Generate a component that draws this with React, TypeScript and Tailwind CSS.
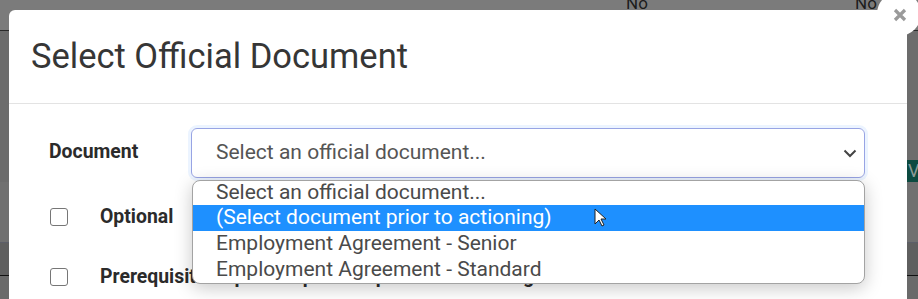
import React from "react";

const options = [
  "Select an official document...",
  "(Select document prior to actioning)",
  "Employment Agreement - Senior",
  "Employment Agreement - Standard",
];

function Backdrop() {
  return (
    <div className="flex flex-col w-full h-full">
      <div className="h-[31px] bg-[#7b7b7b] border-b border-[#2a2a2a] relative">
        <span className="absolute left-[626px] top-[-9px] text-[17px] text-[#1c1c1c]">No</span>
        <span className="absolute left-[855px] top-[-9px] text-[17px] text-[#1c1c1c]">No</span>
      </div>
      <div className="h-[151px] bg-[#6c6c6c] flex justify-end items-end">
        <div className="w-[11px] h-[22px] bg-[#0c4a40] text-[#8a9a96] text-[18px] leading-[22px] pl-[1px] overflow-hidden">V</div>
      </div>
      <div className="h-[61px] bg-[#707070] border-b border-[#5c5e68]"></div>
      <div className="h-[33px] bg-[#5f5f5f] border-b border-[#111]"></div>
      <div className="flex-1 bg-[#6a6a6a]"></div>
    </div>
  );
}

export default function App() {
  return (
    <div
      className="relative w-[918px] h-[299px] overflow-hidden"
      style={{ fontFamily: "Roboto, 'Liberation Sans', sans-serif" }}
    >
      <Backdrop />

      {/* modal */}
      <div className="absolute left-[9px] top-[10px] w-[898px] h-[320px] bg-white rounded-tl-[6px]">
        <div className="h-[94px] border-b border-[#e3e3e3] flex items-center px-[22px]">
          <h1 className="text-[34.5px] text-[#363636] font-normal">Select Official Document</h1>
        </div>

        <div className="pl-[40px] pr-[42px] pt-[24px] relative">
          <div className="flex items-center">
            <label className="w-[142px] text-[19.4px] font-bold text-[#2b2b2b] -mt-[2px]">Document</label>
            <div className="flex-1 h-[50px] rounded-[6px] border border-[#98a4e4] shadow-[0_0_0_3px_rgba(13,110,253,0.08)] flex items-center pl-[24px] pr-[7px]">
              <span className="flex-1 text-[21px] text-[#555]">Select an official document...</span>
              <svg width="14" height="9" viewBox="0 0 14 9">
                <path d="M1.5 1.5l5.5 5.5 5.5-5.5" fill="none" stroke="#444" strokeWidth="2" />
              </svg>
            </div>
          </div>

          <div className="flex items-center mt-[25px] h-[28px]">
            <span className="w-[18px] h-[18px] rounded-[3px] border border-[#767676] ml-[1px]"></span>
            <span className="ml-[32px] text-[19.4px] font-bold text-[#2b2b2b]">Optional</span>
          </div>

          <div className="flex items-center mt-[32px] h-[28px]">
            <span className="w-[18px] h-[18px] rounded-[3px] border border-[#767676] ml-[1px]"></span>
            <span className="ml-[32px] text-[19.4px] font-bold text-[#2b2b2b]">Prerequisite requires a prior step before actioning</span>
          </div>

          {/* native select popup */}
          <div className="absolute left-[183px] top-[76px] w-[673px] bg-white border border-[#a3a3a3] rounded-[8px] shadow-[0_4px_18px_rgba(0,0,0,0.22)] overflow-hidden">
            {options.map((o, i) => (
              <div
                key={o}
                className={
                  (i === 0 ? "h-[24px] " : "h-[26px] ") +
                  (i === 1 ? "bg-[#1e90ff] text-white " : "text-[#4a4a4a] ") +
                  "flex items-center pl-[23px] text-[21px]"
                }
              >
                {o}
              </div>
            ))}
            <svg width="14" height="20" viewBox="0 0 14 20" className="absolute left-[401px] top-[27px]">
              <path d="M1 1v15l4-4 3 6 2-1-3-6h5z" fill="#fff" stroke="#222" strokeWidth="1" />
            </svg>
          </div>
        </div>
      </div>

      {/* close button */}
      <div className="absolute left-[877px] top-[-8px] w-[44px] h-[44px] rounded-full bg-white">
        <svg width="14" height="14" viewBox="0 0 14 14" className="absolute left-[16px] top-[16px]">
          <path d="M2 2l10 10M12 2L2 12" stroke="#9a9a9a" strokeWidth="3.2" strokeLinecap="butt" />
        </svg>
      </div>
    </div>
  );
}
